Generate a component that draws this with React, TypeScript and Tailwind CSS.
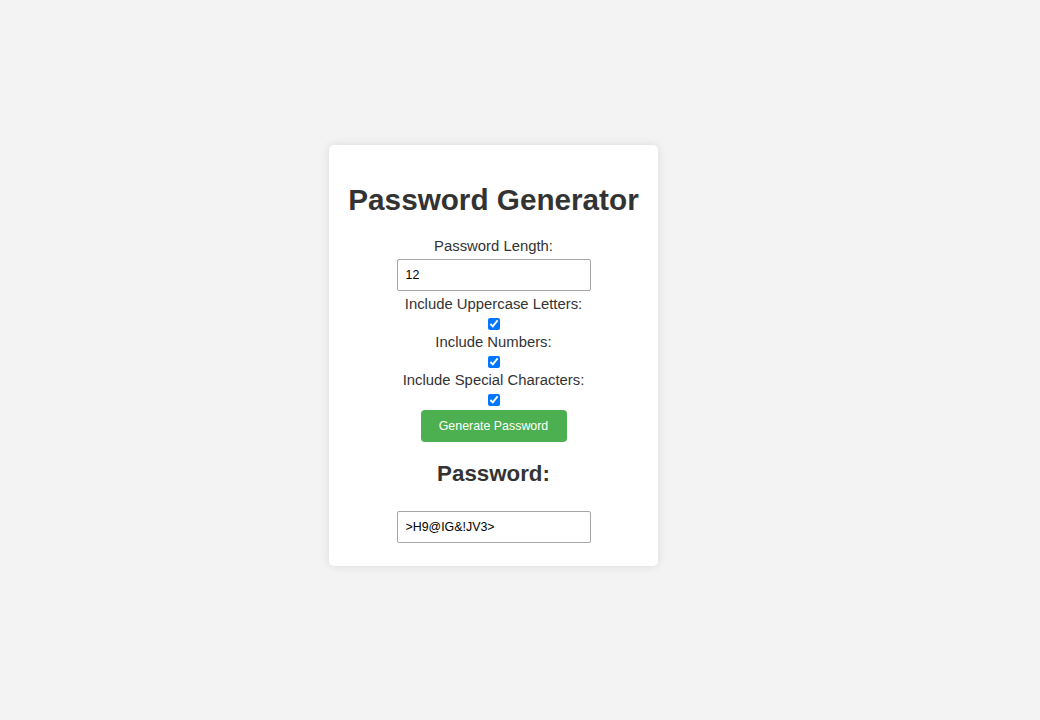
import { useState } from "react";

export default function App() {
  const [length, setLength] = useState("12");
  const [password] = useState(">H9@IG&!JV3>");

  return (
    <div
      className="min-h-screen w-full bg-[#f3f3f3] flex justify-center items-start pt-[145px] pr-[53px] text-[#333]"
      style={{ fontFamily: '"Liberation Sans", Arial, sans-serif' }}
    >
      <div className="w-[329px] bg-white rounded-[5px] shadow-[0_0_10px_rgba(0,0,0,0.1)] px-5 pt-5 pb-[23px] flex flex-col items-center text-center">
        <h1 className="mt-[18px] text-[29.7px] leading-[34px] font-bold text-[#333] whitespace-nowrap">
          Password Generator
        </h1>

        <label className="mt-[21px] text-[14.85px] leading-[17px]">Password Length:</label>
        <input
          type="number"
          value={length}
          onChange={(e) => setLength(e.target.value)}
          className="mt-[4px] w-[194px] h-[32px] px-2 border border-[#a6a6a6] rounded-[2px] text-[12.4px] text-black outline-none [appearance:textfield]"
        />

        <label className="mt-[5px] text-[14.85px] leading-[17px]">Include Uppercase Letters:</label>
        <input type="checkbox" defaultChecked className="mt-[5px] w-[12px] h-[12px]" />

        <label className="mt-[4px] text-[14.85px] leading-[17px]">Include Numbers:</label>
        <input type="checkbox" defaultChecked className="mt-[5px] w-[12px] h-[12px]" />

        <label className="mt-[4px] text-[14.85px] leading-[17px]">Include Special Characters:</label>
        <input type="checkbox" defaultChecked className="mt-[5px] w-[12px] h-[12px]" />

        <button className="mt-[4px] w-[146px] h-[32px] bg-[#4caf50] text-white text-[12.4px] rounded-[4px]">
          Generate Password
        </button>

        <h2 className="mt-[19px] text-[22.3px] leading-[26px] font-bold text-[#333]">Password:</h2>

        <input
          type="text"
          readOnly
          value={password}
          className="mt-[24px] w-[194px] h-[32px] px-2 border border-[#a6a6a6] rounded-[2px] text-[12.4px] text-black outline-none"
        />
      </div>
    </div>
  );
}
